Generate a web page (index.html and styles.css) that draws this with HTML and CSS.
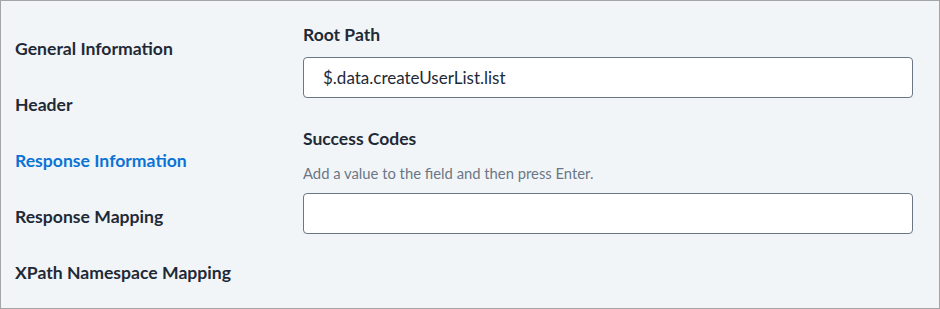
FILE: index.html
```html
<!doctype html>
<html>
<head>
<meta charset="utf-8">
<title>Response Information</title>
<link rel="stylesheet" href="styles.css">
</head>

<body>
<div class="panel">
	<ul class="side_nav">
		<li>General Information</li>
		<li>Header</li>
		<li class="active">Response Information</li>
		<li>Response Mapping</li>
		<li>XPath Namespace Mapping</li>
	</ul>
	<div class="form">
		<div class="field">
			<label class="label">Root Path</label>
			<input class="text_input" type="text" value="$.data.createUserList.list">
		</div>
		<div class="field">
			<label class="label">Success Codes</label>
			<p class="hint">Add a value to the field and then press Enter.</p>
			<input class="text_input" type="text" value="">
		</div>
	</div>
</div>
</body>
</html>
```

FILE: styles.css
```css
*{ padding:0; margin:0; box-sizing:border-box;}
body{ font-family:Lato, "Noto Sans", sans-serif; color:#1f2a37;}
ul{ list-style:none;}
.panel{ width:940px; height:309px; border:1px solid #a5a5a5; background-color:#f2f5f8; display:flex;}
.side_nav{ width:302px; padding:20px 0 0 14px; flex-shrink:0;}
.side_nav li{ height:56px; line-height:56px; font-size:17.6px; font-weight:bold; white-space:nowrap;}
.side_nav li.active{ color:#0b73d4;}
.form{ flex:1; padding:22px 26px 0 0; display:flex; flex-direction:column;}
.field{ display:flex; flex-direction:column; margin-bottom:29px;}
.label{ font-size:17.5px; font-weight:bold; line-height:24px; margin-bottom:10px;}
.hint{ font-size:14.8px; line-height:20px; color:#6b7785; margin-top:2px; margin-bottom:10px;}
.text_input{ width:100%; height:41px; border:1px solid #6a7785; border-radius:4px; background-color:#fff; padding:0 19px; font-family:Lato, "Noto Sans", sans-serif; font-size:17px; color:#1f2a37; outline:none;}
```
